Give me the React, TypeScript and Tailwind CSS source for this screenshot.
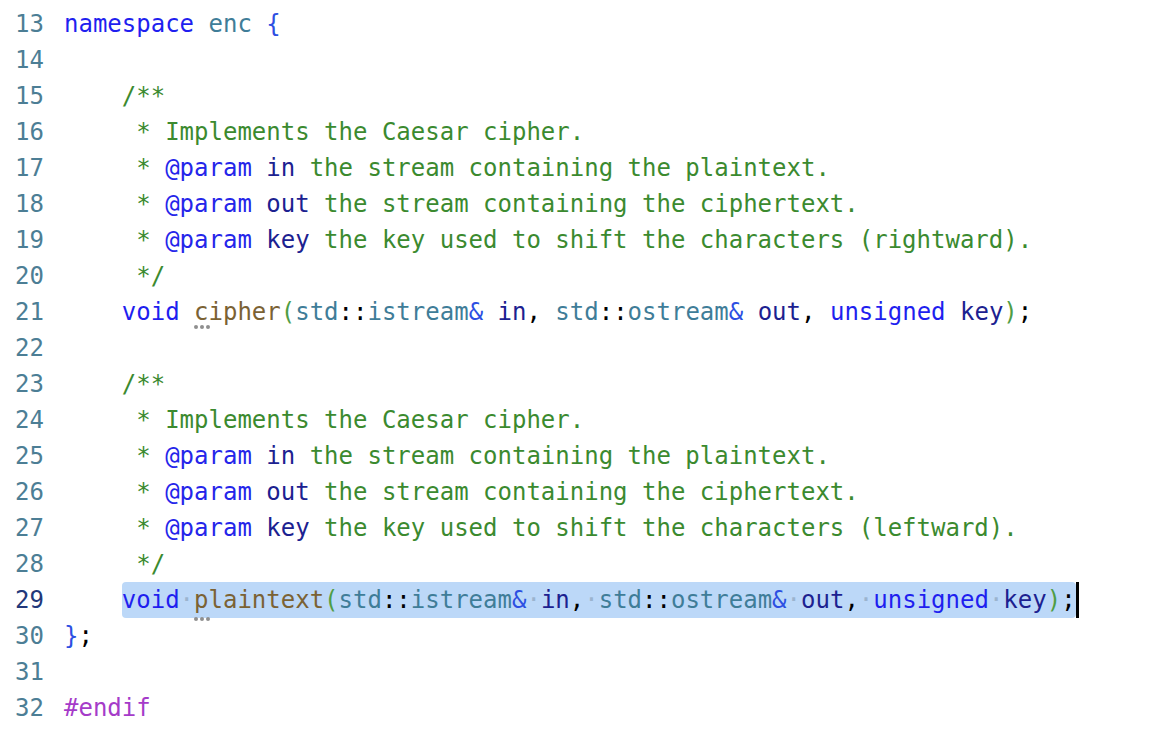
import React from "react";

type Tok = [string, string];

const kw = "text-[#1f1fef]";
const ty = "text-[#3f7d98]";
const br = "text-[#2d4fe2]";
const cm = "text-[#3b8a2f]";
const tag = "text-[#2525ea]";
const pn = "text-[#1c2190]";
const fn = "text-[#7b6234]";
const pa = "text-[#4f9d45]";
const pl = "text-black";
const pp = "text-[#a53bc9]";

const doc = (dir: string): Tok[][] => [
  [["    /**", cm]],
  [["     * Implements the Caesar cipher.", cm]],
  [["     * ", cm], ["@param", tag], [" ", cm], ["in", pn], [" the stream containing the plaintext.", cm]],
  [["     * ", cm], ["@param", tag], [" ", cm], ["out", pn], [" the stream containing the ciphertext.", cm]],
  [["     * ", cm], ["@param", tag], [" ", cm], ["key", pn], [" the key used to shift the characters (" + dir + ").", cm]],
  [["     */", cm]],
];

const decl = (name: string): Tok[] => [
  ["    ", pl],
  ["void", kw],
  [" ", pl],
  [name, fn + " FN"],
  ["(", pa],
  ["std", ty],
  ["::", pl],
  ["istream", ty],
  ["&", br],
  [" ", pl],
  ["in", pn],
  [",", pl],
  [" ", pl],
  ["std", ty],
  ["::", pl],
  ["ostream", ty],
  ["&", br],
  [" ", pl],
  ["out", pn],
  [",", pl],
  [" ", pl],
  ["unsigned", kw],
  [" ", pl],
  ["key", pn],
  [")", pa],
  [";", pl],
];

const lines: Tok[][] = [
  [["namespace", kw], [" ", pl], ["enc", ty], [" ", pl], ["{", br]],
  [],
  ...doc("rightward"),
  decl("cipher"),
  [],
  ...doc("leftward"),
  decl("plaintext"),
  [["}", br], [";", pl]],
  [],
  [["#endif", pp]],
];

const Dots = () => (
  <span className="absolute left-0 top-[31px] flex gap-[2px]">
    <span className="w-[4px] h-[4px] rounded-full bg-[#8f8f8f]" />
    <span className="w-[4px] h-[4px] rounded-full bg-[#8f8f8f]" />
    <span className="w-[4px] h-[4px] rounded-full bg-[#8f8f8f]" />
  </span>
);

const Token = ({ t, sel }: { t: Tok; sel: boolean }) => {
  const [text, cls] = t;
  const isFn = cls.endsWith(" FN");
  const c = isFn ? cls.replace(" FN", "") : cls;
  if (sel && text === " ") {
    return <span className="text-[#9bb4cf]">·</span>;
  }
  if (isFn) {
    return (
      <span className={"relative " + c}>
        {text}
        <Dots />
      </span>
    );
  }
  return <span className={c}>{text}</span>;
};

const Line = ({ n, toks }: { n: number; toks: Tok[] }) => {
  const cur = n === 29;
  return (
    <div className="flex h-[36px] leading-[36px]">
      <div
        className={
          "w-[64px] shrink-0 pr-[20px] text-right " +
          (cur ? "text-[#22387a]" : "text-[#4c7e95]")
        }
      >
        {n}
      </div>
      <div className="whitespace-pre flex">
        {cur ? (
          <>
            <span>{"    "}</span>
            <span className="bg-[#bcd8f8] rounded-[4px] relative">
              {toks.slice(1).map((t, i) => (
                <Token key={i} t={t} sel />
              ))}
            </span>
            <span className="w-[3px] h-[36px] bg-black" />
          </>
        ) : (
          toks.map((t, i) => <Token key={i} t={t} sel={false} />)
        )}
      </div>
    </div>
  );
};

export default function App() {
  return (
    <div
      className="w-[1176px] h-[730px] bg-white pt-[6px] text-[24px] overflow-hidden"
      style={{ fontFamily: '"DejaVu Sans Mono", monospace' }}
    >
      {lines.map((toks, i) => (
        <Line key={i} n={13 + i} toks={toks} />
      ))}
    </div>
  );
}
